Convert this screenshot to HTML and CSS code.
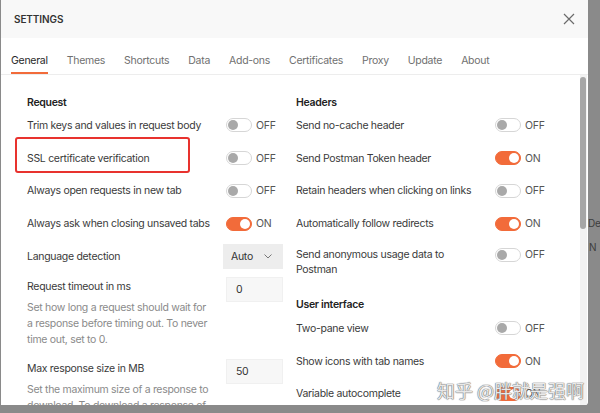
FILE: index.html
```html
<!DOCTYPE html>
<html>
<head>
<meta charset="utf-8">
<link rel="stylesheet" href="styles.css">
</head>
<body>
<div class="screen">
  <div class="modal">
    <header class="head">
      <span class="title">SETTINGS</span>
      <svg class="close" width="12" height="12" viewBox="0 0 12 12"><path d="M1 1 L11 11 M11 1 L1 11" stroke="#6b6b6b" stroke-width="1.2" fill="none"/></svg>
    </header>
    <nav class="tabs">
      <span class="tab active">General</span>
      <span class="tab">Themes</span>
      <span class="tab">Shortcuts</span>
      <span class="tab">Data</span>
      <span class="tab">Add-ons</span>
      <span class="tab">Certificates</span>
      <span class="tab">Proxy</span>
      <span class="tab">Update</span>
      <span class="tab">About</span>
    </nav>
    <div class="content">
      <div class="cols">
        <div class="col">
          <div class="sec">Request</div>
          <div class="row"><span class="lbl">Trim keys and values in request body</span><span class="tg"></span><span class="st">OFF</span></div>
          <div class="row mark"><span class="lbl">SSL certificate verification</span><span class="tg"></span><span class="st">OFF</span></div>
          <div class="row"><span class="lbl">Always open requests in new tab</span><span class="tg"></span><span class="st">OFF</span></div>
          <div class="row"><span class="lbl">Always ask when closing unsaved tabs</span><span class="tg on"></span><span class="st">ON</span></div>
          <div class="row"><span class="lbl">Language detection</span><span class="select">Auto<svg class="chev" width="8" height="5" viewBox="0 0 8 5"><path d="M0.5 0.5 L4 4 L7.5 0.5" stroke="#777" stroke-width="1" fill="none"/></svg></span></div>
          <div class="block">
            <div class="btext">
              <div class="blbl">Request timeout in ms</div>
              <div class="desc">Set how long a request should wait for a response before timing out. To never time out, set to 0.</div>
            </div>
            <span class="inp">0</span>
          </div>
          <div class="block second">
            <div class="btext">
              <div class="blbl">Max response size in MB</div>
              <div class="desc">Set the maximum size of a response to download. To download a response of any size, set to 0.</div>
            </div>
            <span class="inp">50</span>
          </div>
        </div>
        <div class="col">
          <div class="sec">Headers</div>
          <div class="row"><span class="lbl">Send no-cache header</span><span class="tg"></span><span class="st">OFF</span></div>
          <div class="row"><span class="lbl">Send Postman Token header</span><span class="tg on"></span><span class="st">ON</span></div>
          <div class="row"><span class="lbl">Retain headers when clicking on links</span><span class="tg"></span><span class="st">OFF</span></div>
          <div class="row"><span class="lbl">Automatically follow redirects</span><span class="tg on"></span><span class="st">ON</span></div>
          <div class="row two"><span class="lbl">Send anonymous usage data to Postman</span><span class="tg"></span><span class="st">OFF</span></div>
          <div class="sec ui">User interface</div>
          <div class="row"><span class="lbl">Two-pane view</span><span class="tg"></span><span class="st">OFF</span></div>
          <div class="row"><span class="lbl">Show icons with tab names</span><span class="tg on"></span><span class="st">ON</span></div>
          <div class="row"><span class="lbl">Variable autocomplete</span><span class="tg on"></span><span class="st">ON</span></div>
        </div>
      </div>
      <div class="track"><div class="thumb"></div></div>
    </div>
  </div>
  <div class="behind">
    <span class="b1">De</span>
    <span class="b2">N</span>
  </div>
</div>
<div class="wm">知乎 @胖就是强啊</div>
</body>
</html>
```
FILE: styles.css
```css
html, body {
  margin: 0;
  padding: 0;
}
body {
  width: 600px;
  height: 413px;
  overflow: hidden;
  background: #8a8a8a;
  font-family: Inter, "Noto Sans", sans-serif;
  font-size: 10.5px;
  letter-spacing: -0.3px;
  color: #3a3a3a;
  position: relative;
}
.screen {
  display: flex;
  height: 413px;
  padding-left: 1px;
  box-sizing: border-box;
}
.modal {
  width: 587px;
  height: 405px;
  background: #fff;
  display: flex;
  flex-direction: column;
  border-bottom-right-radius: 3px;
  overflow: hidden;
}
.head {
  height: 38px;
  flex: none;
  background: #f8f8f8;
  display: flex;
  align-items: center;
  justify-content: space-between;
  padding: 0 13px 0 13px;
}
.title {
  font-size: 10px;
  font-weight: 600;
  color: #333;
  letter-spacing: -0.1px;
}
.close {
  display: block;
}
.tabs {
  height: 37px;
  flex: none;
  display: flex;
  gap: 19px;
  padding-left: 10px;
  border-bottom: 1px solid #ededed;
  box-sizing: border-box;
}
.tab {
  display: flex;
  align-items: center;
  color: #707070;
  font-size: 10.5px;
  letter-spacing: -0.28px;
  border-bottom: 2px solid transparent;
  padding-top: 10px;
}
.tab.active {
  color: #282828;
  border-bottom-color: #f26b3a;
}
.content {
  flex: 1;
  display: flex;
  justify-content: space-between;
  min-height: 0;
}
.cols {
  display: flex;
  gap: 13px;
  padding-left: 26px;
}
.col {
  width: 256px;
  display: flex;
  flex-direction: column;
}
.sec {
  font-weight: 600;
  color: #222;
  line-height: 14px;
  padding-top: 21px;
  margin-bottom: -1px;
}
.sec.ui {
  padding-top: 19px;
  margin-bottom: 0;
}
.row {
  display: flex;
  align-items: center;
  height: 32.75px;
  flex: none;
  position: relative;
}
.lbl {
  width: 199px;
  flex: none;
}
.tg {
  width: 26px;
  height: 14px;
  box-sizing: border-box;
  border: 1px solid #d6d6d6;
  border-radius: 8px;
  background: #fff;
  position: relative;
  flex: none;
}
.tg::after {
  content: "";
  position: absolute;
  left: 1px;
  top: 1px;
  width: 10px;
  height: 10px;
  border-radius: 50%;
  background: #a9a9a9;
}
.tg.on {
  background: #f26b3a;
  border-color: #f26b3a;
}
.tg.on::after {
  left: auto;
  right: 1px;
  background: #fff;
}
.st {
  margin-left: 4px;
  color: #555;
}
.row.two {
  height: auto;
  align-items: flex-start;
  padding: 7px 0 2px;
  line-height: 15px;
}
.row.two .lbl {
  width: 180px;
  margin-right: 19px;
}
.row.two .tg {
  margin-top: 1px;
}
.row.two .st {
  line-height: 16px;
}
.mark::before {
  content: "";
  position: absolute;
  left: -12px;
  top: -5px;
  width: 175px;
  height: 36px;
  box-sizing: border-box;
  border: 2px solid #e8322e;
  border-radius: 3px;
}
.select {
  margin-left: -3px;
  width: 60px;
  height: 25px;
  box-sizing: border-box;
  background: #ededed;
  display: flex;
  align-items: center;
  justify-content: space-between;
  padding: 0 11px 0 8px;
  color: #333;
}
.chev {
  display: block;
}
.block {
  display: flex;
  align-items: flex-start;
  padding-top: 4px;
}
.block.second {
  padding-top: 11px;
}
.btext {
  width: 199px;
  flex: none;
}
.blbl {
  line-height: 16px;
  padding-top: 2px;
}
.desc {
  margin-top: 5px;
  line-height: 16px;
  color: #8a8a8a;
  width: 185px;
}
.inp {
  width: 57px;
  height: 25px;
  box-sizing: border-box;
  background: #f7f7f7;
  border: 1px solid #f0f0f0;
  display: flex;
  align-items: center;
  padding-left: 9px;
  color: #333;
}
.track {
  width: 7px;
  margin-right: 1px;
  background: #f2f2f2;
  padding-top: 2px;
}
.thumb {
  width: 6px;
  height: 152px;
  background: #a6a6a6;
  border-radius: 3px;
}
.behind {
  flex: 1;
  display: flex;
  flex-direction: column;
  color: #3d3d3d;
  font-size: 10px;
  overflow: hidden;
  white-space: nowrap;
}
.b1 {
  margin-top: 217px;
}
.b2 {
  margin-top: 12px;
  margin-left: 1px;
}
.wm {
  position: absolute;
  left: 437px;
  top: 378px;
  font-family: "Noto Sans CJK SC", sans-serif;
  font-size: 18px;
  line-height: 24px;
  letter-spacing: 0;
  color: rgba(255, 255, 255, 0.85);
  text-shadow: 0 0 1px #777, 0 0 1px #777, 0 0 1px #777;
}
```
